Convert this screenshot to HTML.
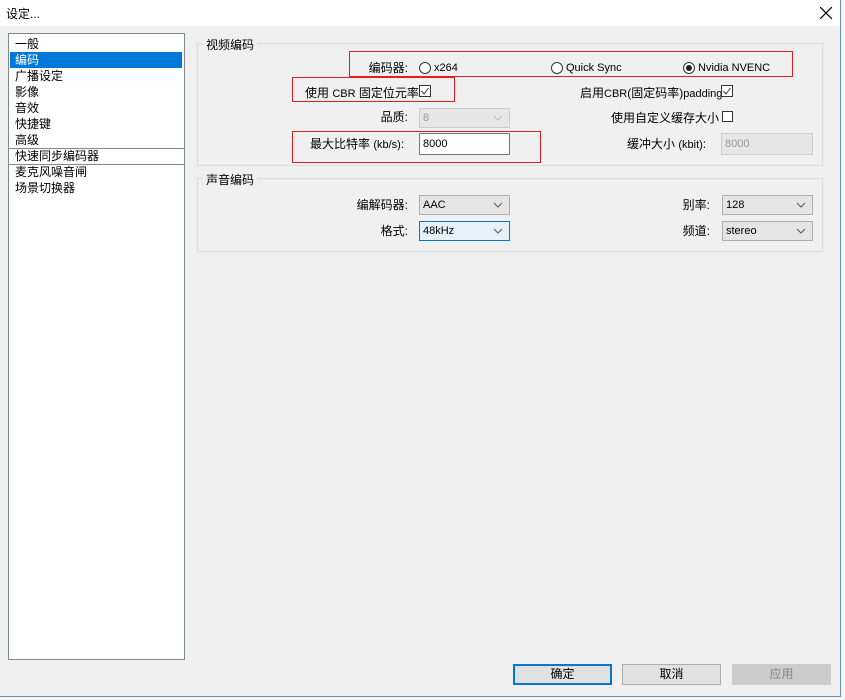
<!DOCTYPE html><html><head><meta charset="utf-8"><style>
body{margin:0;width:845px;height:700px;background:#f4f4f4;position:relative;overflow:hidden;font-family:"Liberation Sans","Noto Sans CJK SC",sans-serif;font-size:12px;color:#000}
.a{position:absolute}
.win{left:0;top:0;width:840px;height:696px;background:#f0f0f0;border-right:1px solid #6a8caf;border-bottom:1px solid #6a8caf}
.title{left:0;top:0;width:840px;height:26px;background:#fff}
.list{left:8px;top:33px;width:175px;height:625px;background:#fff;border:1px solid #828790}
.it{position:absolute;left:6px;height:16px;line-height:16px;font-size:12px}
.grp{border:1px solid #dcdcdc;}
.lbl{text-align:right;line-height:16px}
.box{background:#fff;border:1px solid #adadad;height:20px;box-sizing:border-box;line-height:18px;padding-left:3px;font-size:11px}
.dis{background:#e6e6e6;color:#999;border-color:#ccc}
.red{border:1px solid #e02020}
.cb{width:11px;height:11px;border:1px solid #333;background:#fff;box-sizing:border-box}
.rd{width:12px;height:12px;border:1px solid #333;border-radius:50%;background:#fff;box-sizing:border-box}
.arr{position:absolute;right:6px;top:6px}
.btn{height:21px;box-sizing:border-box;border:1px solid #adadad;background:#e1e1e1;text-align:center;line-height:19px}
.s{font-size:11px}
</style></head><body>
<div class="a win"></div>
<div class="a title"></div>
<div class="a" style="left:6px;top:5px">设定...</div>
<svg class="a" style="left:820px;top:7px" width="12" height="12"><path d="M0 0L12 12M12 0L0 12" stroke="#000" stroke-width="1.2"/></svg>
<div class="a list">
<div class="it" style="top:2px">一般</div>
<div class="it" style="top:18px;left:1px;width:172px;background:#0078d7;color:#fff;padding-left:5px;box-sizing:border-box">编码</div>
<div class="it" style="top:34px">广播设定</div>
<div class="it" style="top:50px">影像</div>
<div class="it" style="top:66px">音效</div>
<div class="it" style="top:82px">快捷键</div>
<div class="it" style="top:98px">高级</div>
<div class="a" style="left:0;top:114px;width:175px;border-top:1px solid #888"></div>
<div class="it" style="top:114px">快速同步编码器</div>
<div class="a" style="left:0;top:130px;width:175px;border-top:1px solid #888"></div>
<div class="it" style="top:130px">麦克风噪音闸</div>
<div class="it" style="top:146px">场景切换器</div>
</div>
<div class="a grp" style="left:197px;top:43px;width:624px;height:121px"></div>
<div class="a" style="left:203px;top:36px;background:#f0f0f0;padding:0 3px">视频编码</div>
<div class="a red" style="left:349px;top:51px;width:442px;height:24px"></div>
<div class="a lbl" style="left:330px;top:60px;width:78px">编码器:</div>
<div class="a rd" style="left:419px;top:62px"></div><div class="a s" style="left:434px;top:62px">x264</div>
<div class="a rd" style="left:551px;top:62px"></div><div class="a s" style="left:566px;top:62px">Quick Sync</div>
<div class="a rd" style="left:683px;top:62px"><div class="a" style="left:2px;top:2px;width:6px;height:6px;border-radius:50%;background:#222"></div></div><div class="a s" style="left:698px;top:62px">Nvidia NVENC</div>
<div class="a red" style="left:292px;top:77px;width:161px;height:23px"></div>
<div class="a" style="left:305px;top:84px"><span>使用 </span><span class="s">CBR</span> 固定位元率</div>
<svg class="a" style="left:419px;top:85px" width="12" height="12"><rect x=".5" y=".5" width="11" height="11" fill="#fff" stroke="#333"/><path d="M2.5 6l2.5 3 4.5-6" fill="none" stroke="#333"/></svg>
<div class="a" style="left:580px;top:84px">启用<span class="s">CBR</span>(固定码率)<span class="s">padding</span></div>
<svg class="a" style="left:721px;top:85px" width="12" height="12"><rect x=".5" y=".5" width="11" height="11" fill="#fff" stroke="#333"/><path d="M2.5 6l2.5 3 4.5-6" fill="none" stroke="#333"/></svg>
<div class="a lbl" style="left:330px;top:109px;width:78px">品质:</div>
<div class="a box dis" style="left:419px;top:108px;width:91px">8<svg class="arr" width="10" height="6"><path d="M1 1l4 4 4-4" fill="none" stroke="#bbb"/></svg></div>
<div class="a" style="left:611px;top:109px">使用自定义缓存大小</div>
<div class="a cb" style="left:722px;top:111px"></div>
<div class="a red" style="left:292px;top:131px;width:247px;height:30px"></div>
<div class="a" style="left:310px;top:135px">最大比特率 <span class="s">(kb/s)</span>:</div>
<div class="a box" style="left:419px;top:133px;width:91px;height:22px;line-height:20px;border-color:#7a7a7a">8000</div>
<div class="a" style="left:627px;top:135px">缓冲大小 <span class="s">(kbit)</span>:</div>
<div class="a box dis" style="left:721px;top:133px;width:92px;height:22px;line-height:20px">8000</div>
<div class="a grp" style="left:197px;top:178px;width:624px;height:72px"></div>
<div class="a" style="left:203px;top:171px;background:#f0f0f0;padding:0 3px">声音编码</div>
<div class="a lbl" style="left:330px;top:197px;width:78px">编解码器:</div>
<div class="a box" style="left:419px;top:195px;width:91px;background:#e5e5e5">AAC<svg class="arr" width="10" height="6"><path d="M1 1l4 4 4-4" fill="none" stroke="#555"/></svg></div>
<div class="a lbl" style="left:330px;top:223px;width:78px">格式:</div>
<div class="a box" style="left:419px;top:221px;width:91px;background:#e5f1fb;border-color:#0078d7">48kHz<svg class="arr" width="10" height="6"><path d="M1 1l4 4 4-4" fill="none" stroke="#555"/></svg></div>
<div class="a lbl" style="left:640px;top:197px;width:70px">别率:</div>
<div class="a box" style="left:722px;top:195px;width:91px;background:#e5e5e5">128<svg class="arr" width="10" height="6"><path d="M1 1l4 4 4-4" fill="none" stroke="#555"/></svg></div>
<div class="a lbl" style="left:640px;top:223px;width:70px">频道:</div>
<div class="a box" style="left:722px;top:221px;width:91px;background:#e5e5e5">stereo<svg class="arr" width="10" height="6"><path d="M1 1l4 4 4-4" fill="none" stroke="#555"/></svg></div>
<div class="a btn" style="left:513px;top:664px;width:99px;border:2px solid #0078d7;line-height:17px">确定</div>
<div class="a btn" style="left:622px;top:664px;width:99px">取消</div>
<div class="a btn" style="left:732px;top:664px;width:99px;background:#ccc;border-color:#ccc;color:#888">应用</div>
</body></html>
